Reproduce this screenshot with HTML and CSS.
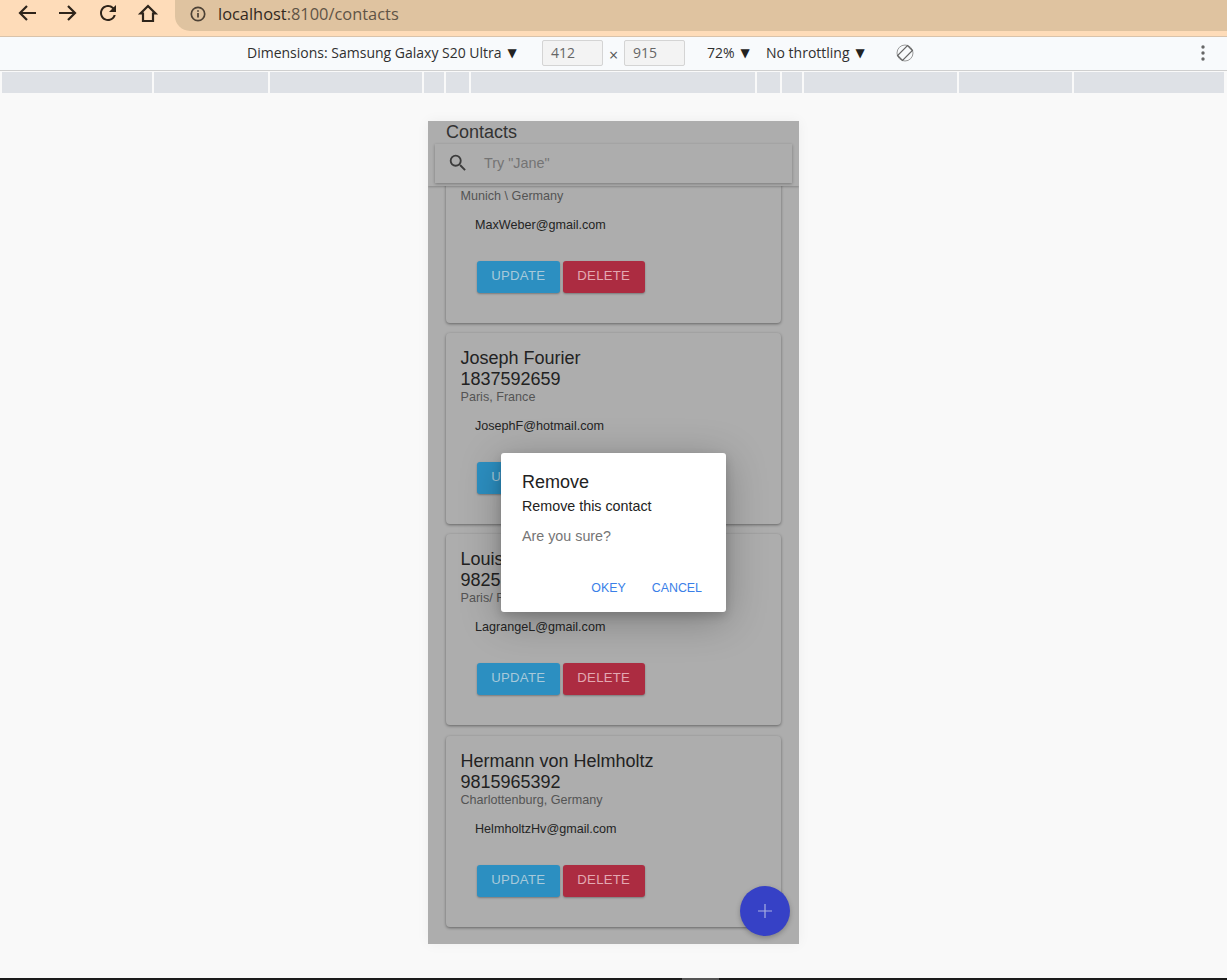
FILE: index.html
```html
<!DOCTYPE html>
<html lang="en">
<head>
<meta charset="utf-8">
<title>Contacts</title>
<link rel="stylesheet" href="styles.css">
</head>
<body>
<header class="browser-bar">
  <nav class="nav-buttons">
    <svg class="nav-icon" viewBox="0 0 24 24"><path class="stroke" d="M20 12H4M11 5 4 12l7 7"/></svg>
    <svg class="nav-icon" viewBox="0 0 24 24"><path class="stroke" d="M3 12h16M12 5l7 7-7 7"/></svg>
    <svg class="nav-icon" viewBox="0 0 24 24"><path class="fill" d="M17.65 6.350A7.958 7.958 0 0 0 12 4c-4.420 0-7.990 3.580-7.990 8s3.570 8 7.990 8c3.730 0 6.840-2.550 7.730-6h-2.080A5.990 5.990 0 0 1 12 18c-3.310 0-6-2.690-6-6s2.690-6 6-6c1.660 0 3.140.690 4.220 1.780L13 11h7V4l-2.350 2.350z"/></svg>
    <svg class="nav-icon" viewBox="0 0 24 24"><path class="stroke" d="M12 5 4.500 12.500H7V20h10v-7.500h2.500z"/></svg>
  </nav>
  <div class="omnibox">
    <svg class="info-icon" viewBox="0 0 16 16"><circle cx="8" cy="8" r="6.700"/><path d="M8 7v4.500M8 4.200v1.600"/></svg>
    <span class="url"><span class="url-host">localhost</span>:8100/contacts</span>
  </div>
</header>

<div class="device-toolbar">
  <span class="tb-text tb-dimensions">Dimensions: Samsung Galaxy S20 Ultra<i class="caret">▼</i></span>
  <span class="tb-input">412</span>
  <span class="tb-times">×</span>
  <span class="tb-input">915</span>
  <span class="tb-text tb-zoom">72%<i class="caret">▼</i></span>
  <span class="tb-text tb-throttle">No throttling<i class="caret">▼</i></span>
  <svg class="tb-rotate" viewBox="0 0 18 18"><circle class="rotate-ring" cx="9" cy="9" r="8"/><path d="M16.420 6.520 11.480 1.580 1.580 11.480 6.520 16.420z"/></svg>
  <svg class="tb-kebab" viewBox="0 0 4 18"><circle cx="2" cy="3" r="1.700"/><circle cx="2" cy="9" r="1.700"/><circle cx="2" cy="15" r="1.700"/></svg>
</div>

<div class="media-bar">
  <span class="seg s150"></span><span class="seg s114"></span><span class="seg s152"></span><span class="seg s20"></span><span class="seg s23"></span><span class="seg s284"></span><span class="seg s23"></span><span class="seg s20"></span><span class="seg s153"></span><span class="seg s113"></span><span class="seg s150"></span>
</div>

<main class="stage">
  <section class="device">
    <header class="app-header">
      <h1 class="app-title">Contacts</h1>
      <div class="search">
        <svg class="search-icon" viewBox="0 0 24 24"><path d="M15.500 14h-.790l-.280-.270A6.471 6.471 0 0 0 16 9.500 6.500 6.500 0 1 0 9.500 16c1.610 0 3.090-.590 4.230-1.570l.270.280v.790l5 4.990L20.490 19l-4.990-5zm-6 0C7.010 14 5 11.990 5 9.500S7.010 5 9.500 5 14 7.010 14 9.500 11.990 14 9.500 14z"/></svg>
        <span class="search-placeholder">Try "Jane"</span>
      </div>
    </header>

    <div class="list">
      <div class="list-inner">
        <article class="card">
          <div class="name">Max Weber</div>
          <div class="phone">4915203847</div>
          <div class="city">Munich \ Germany</div>
          <div class="email">MaxWeber@gmail.com</div>
          <div class="actions"><span class="btn btn-update">UPDATE</span><span class="btn btn-delete">DELETE</span></div>
        </article>
        <article class="card">
          <div class="name">Joseph Fourier</div>
          <div class="phone">1837592659</div>
          <div class="city">Paris, France</div>
          <div class="email">JosephF@hotmail.com</div>
          <div class="actions"><span class="btn btn-update">UPDATE</span><span class="btn btn-delete">DELETE</span></div>
        </article>
        <article class="card">
          <div class="name">Louis Lagrange</div>
          <div class="phone">9825730164</div>
          <div class="city">Paris/ France</div>
          <div class="email">LagrangeL@gmail.com</div>
          <div class="actions"><span class="btn btn-update">UPDATE</span><span class="btn btn-delete">DELETE</span></div>
        </article>
        <article class="card">
          <div class="name">Hermann von Helmholtz</div>
          <div class="phone">9815965392</div>
          <div class="city">Charlottenburg, Germany</div>
          <div class="email">HelmholtzHv@gmail.com</div>
          <div class="actions"><span class="btn btn-update">UPDATE</span><span class="btn btn-delete">DELETE</span></div>
        </article>
      </div>
    </div>

    <span class="fab"><svg viewBox="0 0 14 14"><path d="M7 0v14M0 7h14"/></svg></span>

    <div class="overlay">
      <div class="dialog">
        <div class="dialog-title">Remove</div>
        <div class="dialog-sub">Remove this contact</div>
        <div class="dialog-msg">Are you sure?</div>
        <div class="dialog-actions"><span class="dialog-btn">OKEY</span><span class="dialog-btn">CANCEL</span></div>
      </div>
    </div>
  </section>
</main>

<footer class="taskbar"><span class="taskbar-item"></span></footer>
</body>
</html>
```
FILE: styles.css
```css
* { box-sizing: border-box; }
html, body { margin: 0; height: 100%; }
body {
  height: 980px;
  overflow: hidden;
  display: flex;
  flex-direction: column;
  background: #f9f9f9;
  font-family: "Liberation Sans", Arial, sans-serif;
}

/* browser chrome */
.browser-bar {
  height: 37px;
  flex: none;
  display: flex;
  align-items: flex-start;
  background: #fedcb9;
  border-bottom: 1px solid #d9c3ab;
}
.nav-buttons { display: flex; width: 175px; padding: 1px 0 0 16px; gap: 16px; }
.nav-icon { width: 24px; height: 24px; flex: none; }
.stroke { fill: none; stroke: #2e241a; stroke-width: 2.200; }
.fill { fill: #2e241a; }
.omnibox {
  flex: 1;
  height: 31px;
  display: flex;
  align-items: center;
  padding: 0 0 4px 15px;
  background: #dfc3a0;
  border-bottom-left-radius: 15px;
}
.info-icon { width: 16px; height: 16px; fill: none; stroke: #4c4135; stroke-width: 1.700; margin-right: 12px; }
.url { font-family: "Open Sans", sans-serif; font-size: 16.400px; color: #5f5446; }
.url-host { color: #33291e; }

.device-toolbar {
  height: 34px;
  flex: none;
  display: flex;
  align-items: center;
  padding: 0 0 2px 247px;
  background: #f8fafc;
  border-bottom: 1px solid #cfcfcf;
  font-family: "Open Sans", sans-serif;
  font-size: 14px;
  color: #303030;
}
.tb-text { display: flex; align-items: center; white-space: nowrap; }
.caret { font-style: normal; font-size: 12px; margin-left: 6px; color: #222; font-family: "DejaVu Sans", sans-serif; }
.tb-dimensions { width: 295px; }
.tb-input {
  width: 61px;
  height: 26px;
  padding-left: 8px;
  line-height: 24px;
  background: #f3f3f3;
  border: 1px solid #d4d4d4;
  color: #666;
  border-radius: 2px;
}
.tb-times { width: 21px; text-align: center; color: #555; font-size: 16px; padding-top: 4px; }
.tb-zoom { width: 59px; margin-left: 22px; }
.tb-throttle { width: 130px; }
.tb-rotate { width: 18px; height: 18px; fill: none; stroke: #666; stroke-width: 1.200; }
.rotate-ring { stroke: #999; stroke-width: 1; }
.tb-kebab { width: 4px; height: 18px; margin-left: 287px; fill: #666; }

.media-bar {
  height: 23px;
  flex: none;
  display: flex;
  gap: 2px;
  padding: 1px 3px 1px 2px;
  background: #f9f9f9;
}
.seg { height: 100%; background: #dee1e6; }
.s150 { width: 150px; }
.s114 { width: 114px; }
.s152 { width: 152px; }
.s20 { width: 20px; }
.s23 { width: 23px; }
.s284 { width: 284px; }
.s153 { width: 153px; }
.s113 { width: 113px; }

/* page stage */
.stage { flex: 1; padding: 27px 0 0 428px; min-height: 0; }

.device {
  position: relative;
  width: 371px;
  height: 823px;
  display: flex;
  flex-direction: column;
  overflow: hidden;
  background: #adadad;
  box-shadow: 0 0 12px rgba(0, 0, 0, .05);
}

.app-header {
  position: relative;
  z-index: 1;
  height: 65px;
  flex: none;
  padding: 1px 0 0 7px;
  background: #adadad;
  box-shadow: 0 1px 2px rgba(0, 0, 0, .22);
}
.app-title { margin: 0 0 0 11px; font-size: 18px; font-weight: 400; line-height: 21px; color: #333; }
.search {
  width: 357px;
  height: 39px;
  margin-top: 1px;
  display: flex;
  align-items: center;
  padding: 0 0 2px 12px;
  background: #adadad;
  box-shadow: 0 1px 3px rgba(0, 0, 0, .3);
}
.search-icon { width: 22px; height: 22px; fill: #3c3c3c; margin-right: 15px; }
.search-placeholder { font-size: 14.400px; line-height: 18px; color: #747474; }

.list { flex: 1; min-height: 0; overflow: hidden; padding: 0 18px; }
.list-inner { margin-top: -54.300px; display: flex; flex-direction: column; gap: 10.330px; }

.card {
  flex: none;
  height: 191px;
  padding: 15px 0 0 14.500px;
  border-radius: 4px;
  background: #adadad;
  box-shadow: 0 1px 3px rgba(0, 0, 0, .42);
}
.name { font-size: 18px; line-height: 20px; color: #222; }
.phone { font-size: 18px; line-height: 22px; color: #222; }
.city { font-size: 12.600px; line-height: 14px; color: #545454; }
.email { margin: 14px 0 0 14.500px; font-size: 12.600px; line-height: 17px; color: #242424; }
.actions { display: flex; gap: 3px; margin: 27px 0 0 16.500px; }
.btn {
  width: 82.500px;
  height: 32px;
  display: flex;
  align-items: center;
  justify-content: center;
  padding-bottom: 3px;
  border-radius: 3px;
  font-size: 13.200px;
  letter-spacing: .25px;
  box-shadow: 0 1px 2px rgba(0, 0, 0, .3);
}
.btn-update { background: #2c8fc1; color: #a7c9da; }
.btn-delete { background: #ac2c41; color: #e3a9b2; }

.fab {
  position: absolute;
  right: 9px;
  bottom: 8px;
  width: 50px;
  height: 50px;
  display: flex;
  align-items: center;
  justify-content: center;
  border-radius: 50%;
  background: #3641c6;
  box-shadow: 0 2px 5px rgba(0, 0, 0, .25);
}
.fab svg { width: 14px; height: 14px; fill: none; stroke: #a9b0e2; stroke-width: 1.200; }

/* dialog */
.overlay {
  position: absolute;
  inset: 0;
  z-index: 2;
  display: flex;
  align-items: center;
  justify-content: center;
}
.dialog {
  width: 225px;
  height: 159px;
  padding: 18px 0 0 21px;
  border-radius: 3px;
  background: #fff;
  box-shadow: 0 8px 40px rgba(0, 0, 0, .28), 0 4px 10px rgba(0, 0, 0, .16);
}
.dialog-title { font-size: 18px; line-height: 22px; color: #222; }
.dialog-sub { font-size: 14.300px; line-height: 17px; margin-top: 5px; color: #222; }
.dialog-msg { font-size: 14.300px; line-height: 17px; margin-top: 13px; color: #757575; }
.dialog-actions { display: flex; justify-content: flex-end; gap: 26px; margin-top: 35px; padding-right: 24px; }
.dialog-btn { font-size: 12.400px; line-height: 16px; color: #3a7fe8; }

.taskbar { height: 2px; flex: none; padding-left: 682px; background: #1b1b1b; }
.taskbar-item { display: block; width: 37px; height: 2px; background: #555; }
```
